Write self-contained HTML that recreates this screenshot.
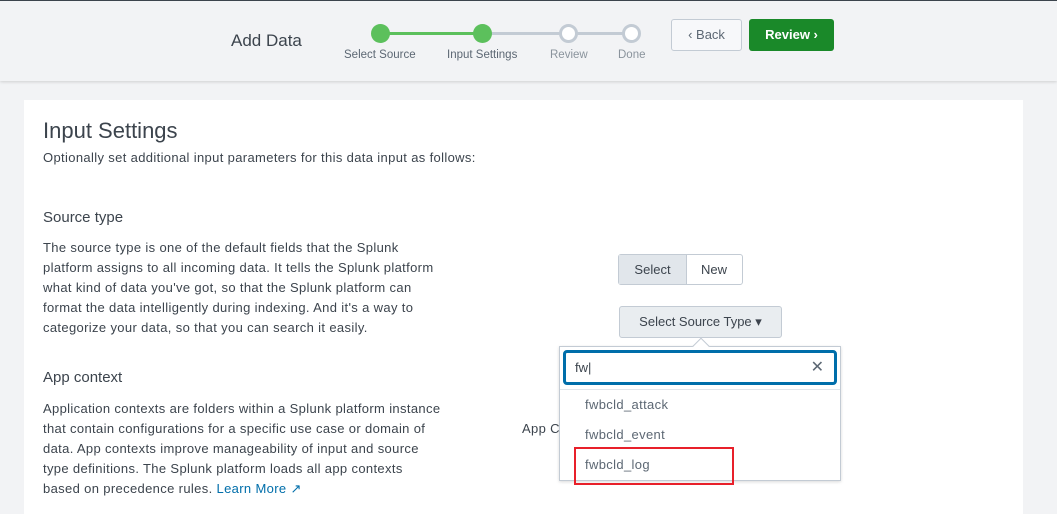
<!DOCTYPE html>
<html><head><style>
*{margin:0;padding:0;box-sizing:border-box}
body{width:1057px;height:514px;overflow:hidden;background:#f2f3f5;font-family:"Liberation Sans",sans-serif;color:#3c444d;position:relative}
.top{position:absolute;left:0;top:0;width:1057px;height:81px;background:#f2f3f5;border-top:1px solid #3c444d;box-shadow:0 1px 3px rgba(0,0,0,.15)}
.abs{position:absolute;white-space:nowrap}
.card{position:absolute;left:24px;top:100px;width:999px;height:414px;background:#fff}
.p{font-size:13px;line-height:20px;color:#3c444d;letter-spacing:0.35px}
.dot{position:absolute;width:19px;height:19px;border-radius:50%}
</style></head><body>
<div class="top">
<div class="abs" style="left:231px;top:30px;font-size:17px;color:#3c444d">Add Data</div>
<div class="abs" style="left:380px;top:31px;width:102px;height:3px;background:#5cc05c"></div>
<div class="abs" style="left:482px;top:31px;width:150px;height:3px;background:#c3cbd4"></div>
<div class="dot" style="left:371px;top:23px;background:#5cc05c"></div>
<div class="dot" style="left:473px;top:23px;background:#5cc05c"></div>
<div class="dot" style="left:559px;top:23px;background:#fff;border:3px solid #c3cbd4"></div>
<div class="dot" style="left:622px;top:23px;background:#fff;border:3px solid #c3cbd4"></div>
<div class="abs" style="left:344px;top:48px;font-size:11.5px;color:#5c6773">Select Source</div>
<div class="abs" style="left:447px;top:48px;font-size:11.5px;color:#5c6773">Input Settings</div>
<div class="abs" style="left:550px;top:48px;font-size:11.5px;color:#8a939c">Review</div>
<div class="abs" style="left:618px;top:48px;font-size:11.5px;color:#8a939c">Done</div>
<div class="abs" style="left:671px;top:18px;width:71px;height:32px;border:1px solid #c3cbd4;border-radius:3px;background:#f7f8fa;font-size:13px;line-height:30px;text-align:center;color:#5c6773">‹ Back</div>
<div class="abs" style="left:749px;top:18px;width:85px;height:32px;border-radius:3px;background:#1a8929;font-size:13px;line-height:32px;text-align:center;color:#fff;font-weight:bold">Review ›</div>
</div>
<div class="card"></div>
<div class="abs" style="left:43px;top:118px;font-size:22px;color:#3c444d">Input Settings</div>
<div class="abs p" style="left:43px;top:148px">Optionally set additional input parameters for this data input as follows:</div>
<div class="abs" style="left:43px;top:209px;font-size:15px">Source type</div>
<div class="abs p" style="left:43px;top:238px">The source type is one of the default fields that the Splunk<br>platform assigns to all incoming data. It tells the Splunk platform<br>what kind of data you've got, so that the Splunk platform can<br>format the data intelligently during indexing. And it's a way to<br>categorize your data, so that you can search it easily.</div>
<div class="abs" style="left:43px;top:369px;font-size:15px">App context</div>
<div class="abs p" style="left:43px;top:399px">Application contexts are folders within a Splunk platform instance<br>that contain configurations for a specific use case or domain of<br>data. App contexts improve manageability of input and source<br>type definitions. The Splunk platform loads all app contexts<br>based on precedence rules. <span style="color:#006eaa">Learn More ↗</span></div>
<div class="abs" style="left:618px;top:254px;width:125px;height:31px;border:1px solid #c3cbd4;border-radius:3px;background:#fff;font-size:13px;line-height:29px">
<span style="display:inline-block;width:68px;height:29px;background:#e1e6eb;text-align:center;border-right:1px solid #c3cbd4">Select</span><span style="display:inline-block;width:54px;text-align:center">New</span></div>
<div class="abs" style="left:619px;top:306px;width:163px;height:32px;border:1px solid #c3cbd4;border-radius:3px;background:#e9edf0;font-size:13px;line-height:30px;text-align:center">Select Source Type ▾</div>
<div class="abs p" style="left:522px;top:419px">App C</div>
<div class="abs" style="left:559px;top:346px;width:282px;height:135px;background:#fff;border:1px solid #c3cbd4;box-shadow:0 1px 3px rgba(0,0,0,.15)"></div>
<div class="abs" style="left:695px;top:340px;width:12px;height:12px;background:#fff;border-left:1px solid #c3cbd4;border-top:1px solid #c3cbd4;transform:rotate(45deg)"></div>
<div class="abs" style="left:563px;top:350px;width:274px;height:35px;border:3px solid #006eaa;border-radius:4px;background:#fff;font-size:13px;line-height:29px;padding-left:9px">fw|<span style="position:absolute;right:10px;font-size:16px;color:#5c6773">✕</span></div>
<div class="abs" style="left:560px;top:389px;width:280px;height:1px;background:#e1e6eb"></div>
<div class="abs p" style="left:585px;top:395px;color:#5c6773">fwbcld_attack</div>
<div class="abs p" style="left:585px;top:425px;color:#5c6773">fwbcld_event</div>
<div class="abs p" style="left:585px;top:455px;color:#5c6773">fwbcld_log</div>
<div class="abs" style="left:574px;top:447px;width:160px;height:38px;border:2px solid #e8202a"></div>
</body></html>
